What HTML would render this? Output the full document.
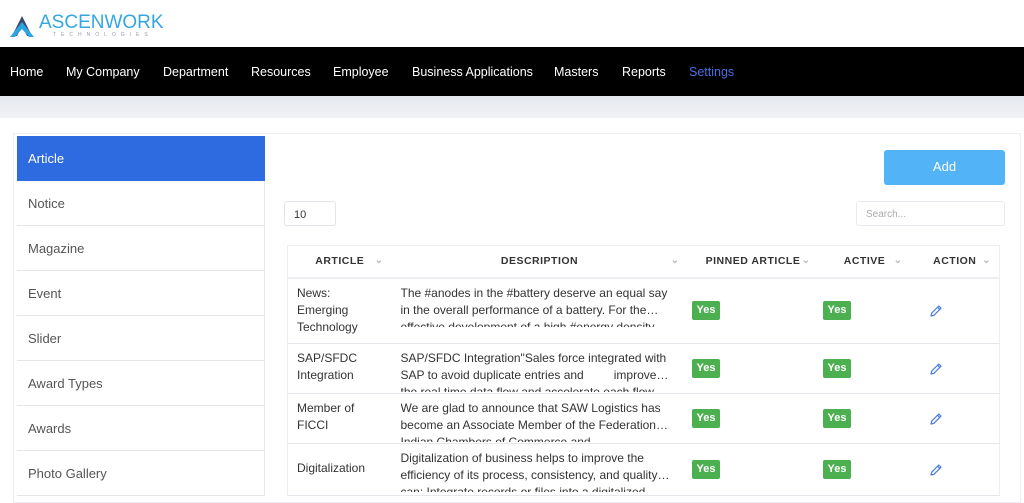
<!DOCTYPE html>
<html><head><style>
*{box-sizing:border-box;margin:0;padding:0}
body{width:1024px;height:496px;overflow:hidden;background:#fff;font-family:"Liberation Sans",sans-serif;position:relative}
.logo{position:absolute;left:10px;top:12px}
.nav{position:absolute;top:47px;left:0;width:1024px;height:49px;background:#000;color:#fff;font-size:12.5px}
.nav span{position:absolute;top:18px}
.band{position:absolute;top:96px;left:0;width:1024px;height:22px;background:linear-gradient(#e6e8ef,#f1f2f6)}
.card{position:absolute;left:13px;top:133px;width:1008px;height:370px;border:1px solid #eceef2;background:#fff}
.side{position:absolute;left:17px;top:136px;width:248px}
.side div{height:45px;border-bottom:1px solid #e7e7e7;border-right:1px solid #e7e7e7;padding-left:11px;line-height:45px;font-size:13px;color:#555}
.side div.a{background:#2f6be0;color:#fff;border:none}
.add{position:absolute;left:884px;top:150px;width:121px;height:35px;background:#52b3f6;border-radius:3px;color:#fff;font-size:13px;text-align:center;line-height:34px}
.len{position:absolute;left:284px;top:201px;width:52px;height:25px;border:1px solid #e3e5ea;border-radius:3px;font-size:11px;padding:7px 0 0 9px;color:#333}
.search{position:absolute;left:856px;top:201px;width:149px;height:25px;border:1px solid #e8eaf0;border-radius:3px;font-size:10px;padding:7px 0 0 9px;color:#aaa}
table{position:absolute;left:287px;top:245px;width:713px;border-collapse:collapse;font-size:12px;color:#333;border:1px solid #eceef3}
th{height:32px;font-size:10.5px;font-weight:bold;color:#333;letter-spacing:.5px;border-bottom:2px solid #eceef3;position:relative}
th i{position:absolute;right:8px;top:9px;color:#bbb;font-style:normal;font-size:10px}
td{border-bottom:1px solid #e6e8ee;vertical-align:top;padding-top:6px;line-height:17px}
td.m{vertical-align:middle;padding-top:0}
.d{height:34px;overflow:hidden;display:block;position:relative;padding-right:12px}
.y{display:inline-block;background:#4caf50;color:#fff;font-size:11px;font-weight:bold;padding:2px 5px;border-radius:2px;line-height:15px}
.p{display:inline-block;vertical-align:middle}
</style></head><body>
<div class="logo"><svg width="160" height="26"><path d="M2 24 L12 4 L22 24 L17 24 L12 14 L7 24Z" fill="#3a4a6a"/><path d="M0 25 L12 10 L24 25 L19 25 L12 17 L5 25Z" fill="#2da4e0"/><text x="29" y="16" font-family="Liberation Sans" font-size="19" fill="#34a7e3">ASCENWORK</text><text x="43" y="24" font-family="Liberation Sans" font-size="5" fill="#99a" letter-spacing="5">TECHNOLOGIES</text></svg></div>
<div class="nav"><span style="left:10px">Home</span><span style="left:66px">My Company</span><span style="left:163px">Department</span><span style="left:251px">Resources</span><span style="left:333px">Employee</span><span style="left:412px">Business Applications</span><span style="left:554px">Masters</span><span style="left:622px">Reports</span><span style="left:689px;color:#4a6fe0">Settings</span></div>
<div class="band"></div>
<div class="card"></div>
<div class="side"><div class="a">Article</div><div>Notice</div><div>Magazine</div><div>Event</div><div>Slider</div><div>Award Types</div><div>Awards</div><div>Photo Gallery</div></div>
<div class="add">Add</div>
<div class="len">10</div>
<div class="search">Search...</div>
<table>
<tr><th style="width:104px">ARTICLE<i>⌄</i></th><th style="width:296px">DESCRIPTION<i>⌄</i></th><th style="width:131px">PINNED ARTICLE<i>⌄</i></th><th style="width:92px">ACTIVE<i>⌄</i></th><th>ACTION<i>⌄</i></th></tr>
<tr style="height:66px"><td style="padding-left:9px">News:<br>Emerging<br>Technology</td><td style="padding-left:9px"><span class="d" style="height:42px">The #anodes in the #battery deserve an equal say in the overall performance of a battery. For the… effective development of a high #energy density</span></td><td class="m" style="padding-left:4px"><span class="y">Yes</span></td><td class="m" style="padding-left:4px"><span class="y">Yes</span></td><td class="m" style="padding-left:18px"><svg class="p" width="14" height="14" viewBox="0 0 14 14"><path d="M2 12 L2.6 9.2 L9.8 2 L12 4.2 L4.8 11.4 Z M8.6 3.2 L10.8 5.4" fill="none" stroke="#4a7ce0" stroke-width="1.2" stroke-linejoin="round"/></svg></td></tr>
<tr style="height:50px"><td style="padding-left:9px">SAP/SFDC<br>Integration</td><td style="padding-left:9px"><span class="d" style="height:42px">SAP/SFDC Integration"Sales force integrated with SAP to avoid duplicate entries and &nbsp;&nbsp;&nbsp;&nbsp;&nbsp;&nbsp;&nbsp;&nbsp;improve… the real time data flow and accelerate each flow</span></td><td class="m" style="padding-left:4px"><span class="y">Yes</span></td><td class="m" style="padding-left:4px"><span class="y">Yes</span></td><td class="m" style="padding-left:18px"><svg class="p" width="14" height="14" viewBox="0 0 14 14"><path d="M2 12 L2.6 9.2 L9.8 2 L12 4.2 L4.8 11.4 Z M8.6 3.2 L10.8 5.4" fill="none" stroke="#4a7ce0" stroke-width="1.2" stroke-linejoin="round"/></svg></td></tr>
<tr style="height:50px"><td style="padding-left:9px">Member of<br>FICCI</td><td style="padding-left:9px"><span class="d" style="height:42px">We are glad to announce that SAW Logistics has become an Associate Member of the Federation… Indian Chambers of Commerce and</span></td><td class="m" style="padding-left:4px"><span class="y">Yes</span></td><td class="m" style="padding-left:4px"><span class="y">Yes</span></td><td class="m" style="padding-left:18px"><svg class="p" width="14" height="14" viewBox="0 0 14 14"><path d="M2 12 L2.6 9.2 L9.8 2 L12 4.2 L4.8 11.4 Z M8.6 3.2 L10.8 5.4" fill="none" stroke="#4a7ce0" stroke-width="1.2" stroke-linejoin="round"/></svg></td></tr>
<tr style="height:52px"><td style="padding-left:9px;padding-top:16px">Digitalization</td><td style="padding-left:9px"><span class="d" style="height:42px">Digitalization of business helps to improve the efficiency of its process, consistency, and quality… can: Integrate records or files into a digitalized</span></td><td class="m" style="padding-left:4px"><span class="y">Yes</span></td><td class="m" style="padding-left:4px"><span class="y">Yes</span></td><td class="m" style="padding-left:18px"><svg class="p" width="14" height="14" viewBox="0 0 14 14"><path d="M2 12 L2.6 9.2 L9.8 2 L12 4.2 L4.8 11.4 Z M8.6 3.2 L10.8 5.4" fill="none" stroke="#4a7ce0" stroke-width="1.2" stroke-linejoin="round"/></svg></td></tr>
</table>
</body></html>
